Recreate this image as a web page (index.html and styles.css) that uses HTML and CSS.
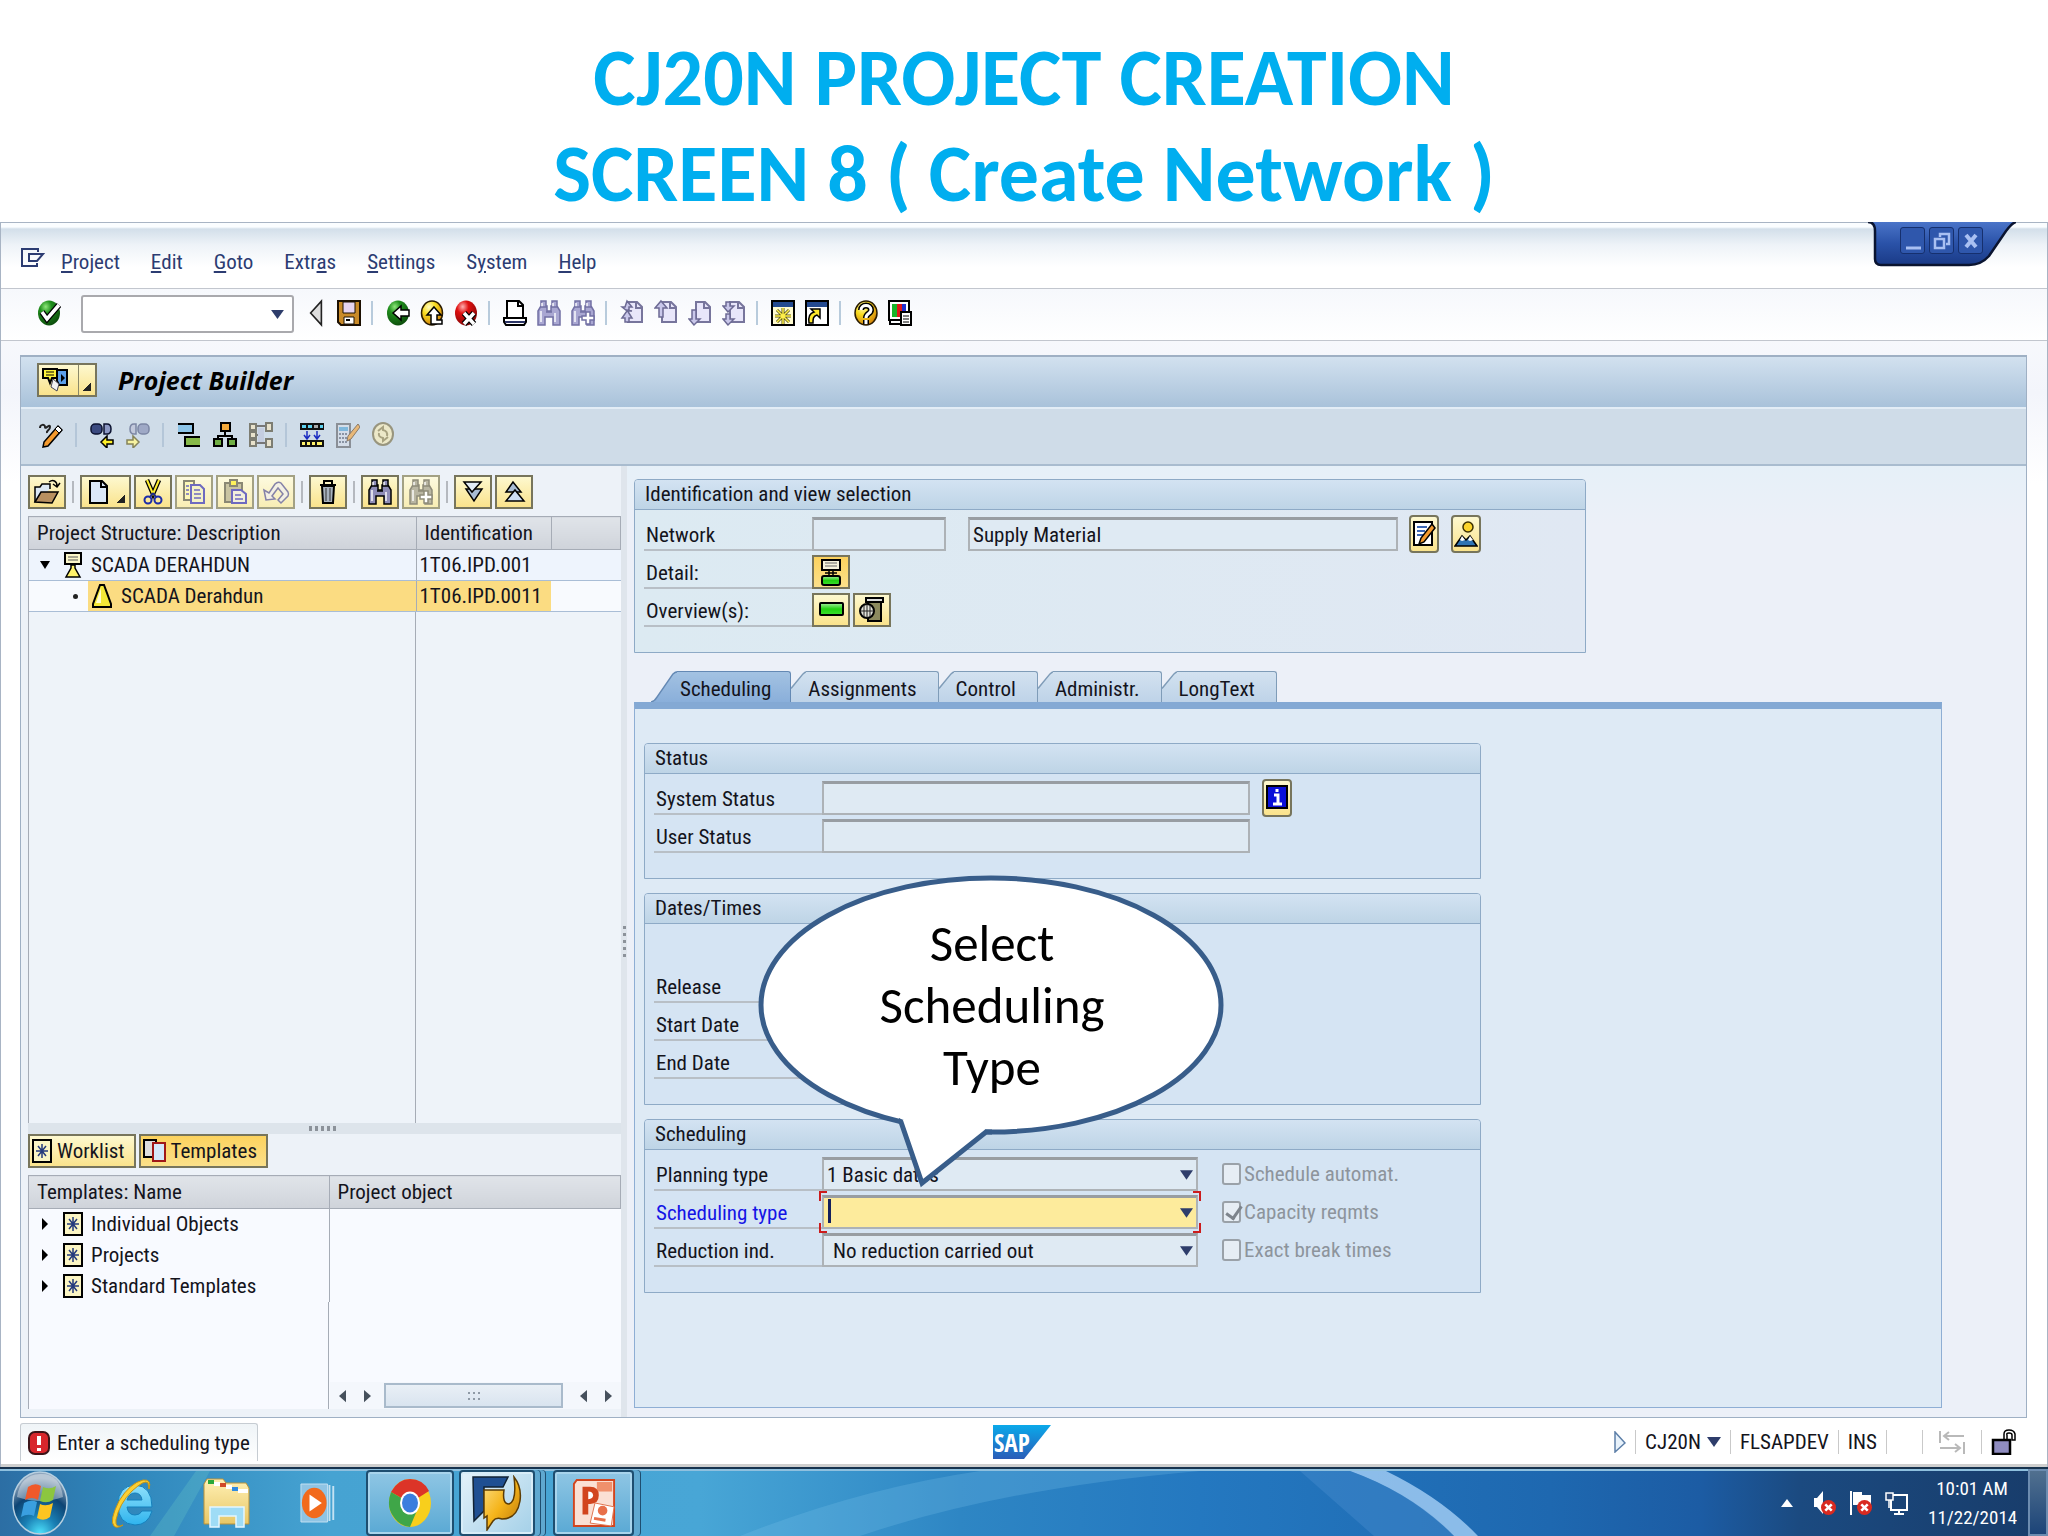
FILE: index.html
```html
<!DOCTYPE html>
<html lang="en">
<head>
<meta charset="utf-8">
<title>CJ20N Project Creation</title>
<link rel="stylesheet" href="styles.css">
</head>
<body>
<svg class="defs" aria-hidden="true">
  <defs>
    <linearGradient id="gLogo" x1="0" y1="0" x2="0" y2="1"><stop offset="0" stop-color="#0aa9ea"/><stop offset="1" stop-color="#2a5db8"/></linearGradient>
    <linearGradient id="gCap" x1="0" y1="0" x2="0" y2="1"><stop offset="0" stop-color="#4a74c8"/><stop offset=".5" stop-color="#2a52a8"/><stop offset="1" stop-color="#1a3a86"/></linearGradient>
    <linearGradient id="gTab" x1="0" y1="0" x2="0" y2="1"><stop offset="0" stop-color="#d3e2f0"/><stop offset="1" stop-color="#bed3e8"/></linearGradient>
    <linearGradient id="gTabOn" x1="0" y1="0" x2="0" y2="1"><stop offset="0" stop-color="#a3c2e2"/><stop offset="1" stop-color="#8aafda"/></linearGradient>
    <linearGradient id="gGreen" x1="0" y1="0" x2="0" y2="1"><stop offset="0" stop-color="#a8f0a0"/><stop offset=".5" stop-color="#22d012"/><stop offset="1" stop-color="#3ee030"/></linearGradient>
    <radialGradient id="gOrb" cx=".5" cy="1" r=".9"><stop offset="0" stop-color="#4fe6ff"/><stop offset=".35" stop-color="#1a7fb4"/><stop offset=".7" stop-color="#0d4474"/><stop offset="1" stop-color="#8fa6bd"/></radialGradient>
    <linearGradient id="gIe" x1="0" y1="0" x2="0" y2="1"><stop offset="0" stop-color="#8fe0fb"/><stop offset="1" stop-color="#2fb4ee"/></linearGradient>
    <linearGradient id="gFolder" x1="0" y1="0" x2="0" y2="1"><stop offset="0" stop-color="#fff0b4"/><stop offset="1" stop-color="#e8c766"/></linearGradient>
    <linearGradient id="gGold" x1="0" y1="0" x2="1" y2="1"><stop offset="0" stop-color="#fce08a"/><stop offset=".5" stop-color="#f5b41a"/><stop offset="1" stop-color="#b8750a"/></linearGradient>
    <radialGradient id="gBallG" cx=".35" cy=".25" r=".9"><stop offset="0" stop-color="#8ee87a"/><stop offset=".3" stop-color="#1f8f1c"/><stop offset="1" stop-color="#083c08"/></radialGradient>
    <radialGradient id="gBallY" cx=".35" cy=".25" r=".9"><stop offset="0" stop-color="#fffbc0"/><stop offset=".35" stop-color="#f8dc20"/><stop offset="1" stop-color="#c86a04"/></radialGradient>
    <radialGradient id="gBallR" cx=".35" cy=".25" r=".9"><stop offset="0" stop-color="#ffb0b0"/><stop offset=".3" stop-color="#e01010"/><stop offset="1" stop-color="#700404"/></radialGradient>
  </defs>
  <symbol id="find" viewBox="0 0 24 26"><path class="find-body" d="M4 1h5v5h1v5h4V6h1V1h5v5l3 5v14h-7v-8h-8v8H1V11l3-5z" stroke="currentColor" stroke-width="1.500"/><path d="M5 3v4M16 3v4M4 11v11M18 13v9" stroke="#fff" stroke-opacity=".7" stroke-width="2" fill="none"/><path d="M4 7h6M14 7h7M9 12h6" stroke="currentColor" stroke-width="1.500"/></symbol>
  <symbol id="plus" viewBox="0 0 24 26"><path d="M15 12h4v4h4v4h-4v4h-4v-4h-4v-4h4z" fill="#fff" stroke="currentColor" stroke-width="1.5"/></symbol>
  <symbol id="star" viewBox="0 0 20 24"><path d="M1 1h18v22H1z" fill="#fbf5c4" stroke="#000" stroke-width="2"/><path d="M10 5v14M4 12h12M6 7l8 10M14 7L6 17" stroke="#253a7c" stroke-width="1.5"/></symbol>
  <symbol id="page" viewBox="0 0 24 26"><path d="M8 2h9l5 5v15H8z" fill="#e8e6fa" stroke="#77759c" stroke-width="2"/><path d="M16 2v6h6" fill="none" stroke="#77759c" stroke-width="2"/></symbol>
  <symbol id="caret" viewBox="0 0 14 12"><path d="M0 1h14L7 11z" fill="#2e3d6b"/></symbol>
  <symbol id="err" viewBox="0 0 14 14"><circle cx="7" cy="7" r="7" fill="#d92a20"/><path d="M4 4l6 6M10 4l-6 6" stroke="#fff" stroke-width="2.4"/></symbol>
</svg>

<h1 class="slide-title">CJ20N PROJECT CREATION<br>SCREEN 8 ( Create Network )</h1>

<main class="window">
  <div class="caption">
    <svg class="caption-shape" viewBox="0 0 148 46" aria-hidden="true"><path d="M0 0q7 0 7 9v28q0 6 6 6h88q12 0 20-9l17-25q6-8 10-9z" fill="url(#gCap)"/><path d="M0 0q7 0 7 9v28q0 6 6 6h88q12 0 20-9l17-25q6-8 10-9" fill="none" stroke="#0a1430" stroke-width="2.5"/></svg>
    <button class="cap-btn" aria-label="Minimize"><svg viewBox="0 0 20 22"><path d="M3 18h15" stroke="#a9c0f2" stroke-width="3"/></svg></button>
    <button class="cap-btn" aria-label="Restore"><svg viewBox="0 0 20 22"><path d="M3 9h9v9H3zM8 7V4h9v10h-3" fill="none" stroke="#a9c0f2" stroke-width="2.5"/></svg></button>
    <button class="cap-btn" aria-label="Close"><svg viewBox="0 0 20 22"><path d="M5 5l10 12M15 5L5 17" stroke="#a9c0f2" stroke-width="4"/></svg></button>
  </div>

  <nav class="menubar">
    <button class="menu-icon" aria-label="Window menu"><svg viewBox="0 0 24 20"><path d="M17 4V1H1v17h15v-3M8 6h14l-6 7H8z" fill="none" stroke="#2c3c72" stroke-width="2"/></svg></button>
    <button><u>P</u>roject</button><button><u>E</u>dit</button><button><u>G</u>oto</button><button>Extr<u>a</u>s</button><button><u>S</u>ettings</button><button>S<u>y</u>stem</button><button><u>H</u>elp</button>
  </nav>

  <div class="sysbar">
    <button aria-label="Enter"><svg viewBox="0 0 24 26"><ellipse cx="12" cy="13" rx="11" ry="12.500" fill="url(#gBallG)"/><path d="M5 12l5 7L22 5" fill="none" stroke="#000" stroke-width="6"/><path d="M5 12l5 7L22 5" fill="none" stroke="#fff" stroke-width="3.500"/></svg></button>
    <span class="cmd"><input type="text" aria-label="Command field"><svg><use href="#caret"/></svg></span>
    <button class="back" aria-label="Collapse"><svg viewBox="0 0 14 26"><path d="M12 2v22L2 13z" fill="#ddd" stroke="#222" stroke-width="1.500"/></svg></button>
    <button aria-label="Save"><svg viewBox="0 0 24 26"><path d="M1 1h22v24H4l-3-3z" fill="#c98a28" stroke="#1c1002" stroke-width="2"/><path d="M6 2h12v11H6z" fill="#e6d4f0" stroke="#1c1002"/><path d="M7 17h10v7H7z" fill="#fff" stroke="#1c1002"/><path d="M9 20h4" stroke="#000" stroke-width="2"/></svg></button>
    <i></i>
    <button aria-label="Back"><svg viewBox="0 0 24 26"><ellipse cx="12" cy="13" rx="11" ry="12.500" fill="url(#gBallG)"/><path d="M7 13l8-7v4h8v6h-8v4z" fill="#fff" stroke="#000" stroke-width="1.500"/></svg></button>
    <button aria-label="Exit"><svg viewBox="0 0 24 26"><ellipse cx="12" cy="13" rx="10.500" ry="12" fill="url(#gBallY)" stroke="#2a1c00" stroke-width="1.500"/><path d="M14 7l7 8h-4v5h5v4H11v-9H7z" fill="#fff" stroke="#000" stroke-width="1.500"/></svg></button>
    <button aria-label="Cancel"><svg viewBox="0 0 24 26"><ellipse cx="12" cy="13" rx="11" ry="12.500" fill="url(#gBallR)"/><path d="M10 13l10 11M20 13L10 24" stroke="#000" stroke-width="6"/><path d="M10 13l10 11M20 13L10 24" stroke="#fff" stroke-width="3.500"/></svg></button>
    <i></i>
    <button aria-label="Print"><svg viewBox="0 0 24 26"><path d="M4 1h12l4 4v13H4z" fill="#fff" stroke="#000" stroke-width="2"/><path d="M15 1v5h5" fill="none" stroke="#000" stroke-width="2"/><path d="M1 18h22v4l-2 3H3l-2-3z" fill="#fff" stroke="#000" stroke-width="2"/><path d="M2 22h20" stroke="#2b3567" stroke-width="2"/></svg></button>
    <button class="dim" aria-label="Find"><svg><use href="#find"/></svg></button>
    <button class="dim" aria-label="Find next"><svg><use href="#find"/><use href="#plus"/></svg></button>
    <i></i>
    <button aria-label="First page"><svg viewBox="0 0 24 26"><use href="#page"/><path d="M7 1l5 6H9v4h3l-5-1 5 8H9v4H5v-4H2l5-7-5-4h3z" fill="#c9c7ea" stroke="#6c6a94" stroke-width="1.500"/></svg></button>
    <button aria-label="Previous page"><svg viewBox="0 0 24 26"><use href="#page"/><path d="M7 1l6 7H9v9H5V8H1z" fill="#c9c7ea" stroke="#6c6a94" stroke-width="1.500"/></svg></button>
    <button aria-label="Next page"><svg viewBox="0 0 24 26"><use href="#page"/><path d="M6 25l-5-6h3v-9h4v9h4z" fill="#c9c7ea" stroke="#6c6a94" stroke-width="1.500"/></svg></button>
    <button aria-label="Last page"><svg viewBox="0 0 24 26"><use href="#page"/><path d="M6 12L1 6h3V2h4v4h4zM6 25l-5-6h3v-5h4v5h4z" fill="#c9c7ea" stroke="#6c6a94" stroke-width="1.500"/></svg></button>
    <i></i>
    <button aria-label="New session"><svg viewBox="0 0 24 26"><path d="M1 1h22v24H1z" fill="#fffbd0" stroke="#000" stroke-width="2"/><path d="M2 2h20v5H2z" fill="#244a90"/><path d="M12 8v16M4 16h16M6 10l12 12M18 10L6 22" stroke="#55501a" stroke-width="3"/><path d="M12 8v16M4 16h16M6 10l12 12M18 10L6 22" stroke="#fff04a" stroke-width="1.500"/></svg></button>
    <button aria-label="Create shortcut"><svg viewBox="0 0 24 26"><path d="M1 1h22v24H1z" fill="#fff" stroke="#000" stroke-width="2"/><path d="M2 2h20v5H2z" fill="#244a90"/><path d="M4 23c-1-7 1-10 5-11l-3-3h9v9l-3-3c-4 1-4 4-4 8z" fill="#ffe92c" stroke="#000" stroke-width="1.500"/></svg></button>
    <i></i>
    <button aria-label="Help"><svg viewBox="0 0 24 26"><ellipse cx="12" cy="13" rx="11" ry="12" fill="url(#gBallY)" stroke="#2a1c00" stroke-width="1.500"/><path d="M7 10c0-6 10-6 10 0 0 4-5 3-5 8M12 20v4" fill="none" stroke="#000" stroke-width="6"/><path d="M7 10c0-6 10-6 10 0 0 4-5 3-5 8M12 20v4" fill="none" stroke="#fff" stroke-width="3"/></svg></button>
    <button aria-label="Customize layout"><svg viewBox="0 0 24 26"><path d="M1 1h20v19H1z" fill="#fff" stroke="#000" stroke-width="2"/><path d="M4 4h5v13H4z" fill="#18b428"/><path d="M9 4h5v13H9z" fill="#e01818"/><path d="M14 4h4v13h-4z" fill="#2030d0"/><path d="M2 20v4h12" fill="none" stroke="#000" stroke-width="2"/><path d="M13 12h10v13H13z" fill="#fff" stroke="#000" stroke-width="2"/><path d="M15 16h6M15 19h6M15 22h6" stroke="#000"/></svg></button>
  </div>

  <section class="frame">
    <header class="titlebar">
      <button class="ybtn func" aria-label="Services for object"><svg viewBox="0 0 36 30"><path d="M4 4h14v9h-5l-2 5-2-5H4z" fill="#fdf23a" stroke="#000" stroke-width="2"/><path d="M7 7h8M7 10h8" stroke="#000"/><path d="M18 5h10v15h-8l-2-4z" fill="#5da0e8" stroke="#000" stroke-width="2"/><path d="M22 9v8l4-4z" fill="#000"/><path d="M14 14l6 5-2 7-6-4z" fill="#f2f2f2" stroke="#445" stroke-width="1"/></svg><span class="split"></span></button>
      <h2>Project Builder</h2>
    </header>
    <div class="appbar">
      <button aria-label="Display / change"><svg viewBox="0 0 24 26"><path d="M1 6c0-4 5-4 5-1s5-4 5 0-4 3-3 6" fill="none" stroke="#222" stroke-width="2"/><path d="M19 4l4 4-14 16-5 1 1-5z" fill="#f49a2e" stroke="#000" stroke-width="1.500"/><path d="M19 4l4 4-3 3-4-4z" fill="#fff" stroke="#000"/></svg></button>
      <i></i>
      <button aria-label="Undo move"><svg viewBox="0 0 24 26"><rect x="1" y="2" width="11" height="10" rx="4" fill="#3b4a80" stroke="#0c1230" stroke-width="1.500"/><path d="M14 2h3q4 0 4 5t-4 5h-3z" fill="#8c98c4" stroke="#0c1230" stroke-width="1.500"/><path d="M11 20l6-6v4h6v4h-6v4z" fill="#fff02a" stroke="#000" stroke-width="1.500"/></svg></button>
      <button aria-label="Redo move"><svg viewBox="0 0 24 26"><rect x="12" y="2" width="11" height="10" rx="4" fill="#9fa9c6" stroke="#7c86a4" stroke-width="1.500"/><path d="M10 2H8Q4 2 4 7t4 5h2z" fill="#c2c9dc" stroke="#7c86a4" stroke-width="1.500"/><path d="M13 20l-6-6v4H1v4h6v4z" fill="#f6f2a0" stroke="#85835a" stroke-width="1.500"/></svg></button>
      <i></i>
      <button aria-label="Planning board"><svg viewBox="0 0 24 26"><path d="M1 2h15v9H1z" fill="#8cc4e8"/><path d="M1 2h15v9H1" fill="none" stroke="#000" stroke-width="2"/><path d="M8 15h15v9H8z" fill="#86b848"/><path d="M23 15H8v9h15" fill="none" stroke="#000" stroke-width="2"/></svg></button>
      <button aria-label="Hierarchy graphic"><svg viewBox="0 0 24 26"><path d="M12 9v5M5 18v-4h14v4" fill="none" stroke="#000" stroke-width="2"/><path d="M8 1h9v8H8z" fill="#f2a83a" stroke="#000" stroke-width="2"/><path d="M1 17h8v7H1zM15 17h8v7h-8z" fill="#6fae44" stroke="#000" stroke-width="2"/></svg></button>
      <button aria-label="Network graphic"><svg viewBox="0 0 24 26"><path d="M7 4h10M7 21h10M7 13h5" stroke="#777" stroke-width="2"/><path d="M1 2h6v6H1zM1 10h6v6H1zM1 18h6v6H1zM17 1h6v8h-6zM17 17h6v8h-6z" fill="#e8e2cc" stroke="#7d7d72" stroke-width="2"/><path d="M9 6h6v14H9z" fill="#c4cde0"/></svg></button>
      <i></i>
      <button aria-label="Mass change"><svg viewBox="0 0 24 26"><path d="M0 1h24v7H0z" fill="#111"/><path d="M2 3h4v3H2zM8 3h4v3H8zM20 3h3v3h-3z" fill="#5ed2f0"/><path d="M14 3h4v3h-4z" fill="#aaa"/><path d="M7 9v7M4 13l3 4 3-4M17 9v7M14 13l3 4 3-4" fill="none" stroke="#1c2cc0" stroke-width="1.500"/><path d="M0 18h24v7H0z" fill="#111"/><path d="M2 20h3v3H2zM7 20h3v3H7zM12 20h3v3h-3zM17 20h5v3h-5z" fill="#fff26a"/></svg></button>
      <button aria-label="Costing"><svg viewBox="0 0 24 26"><path d="M1 2h13v23H1z" fill="#d4dde8" stroke="#8a8f96" stroke-width="2"/><path d="M3 5h9v4H3z" fill="#7fb8dc"/><path d="M3 12h9M3 16h9M3 20h9" stroke="#8a94a4" stroke-width="2" stroke-dasharray="2 1"/><path d="M22 2l2 3-9 12-4 2 1-5z" fill="#e8b878" stroke="#8b7a66"/></svg></button>
      <button aria-label="Settle"><svg viewBox="0 0 24 26"><ellipse cx="11" cy="12" rx="10" ry="11" fill="#ece8c8" stroke="#98957e" stroke-width="2"/><path d="M6 9l5-4v3q5 1 4 6M16 15l-5 4v-3q-5-1-4-5" fill="none" stroke="#a8a280" stroke-width="2"/></svg></button>
    </div>

    <div class="work">
      <aside class="left">
        <div class="treebar">
          <button class="ybtn" aria-label="Open"><svg viewBox="0 0 30 28"><path d="M3 24V9h5l2-3h8v5" fill="#dce8f4" stroke="#000" stroke-width="1.500"/><path d="M3 24l6-10h17l-6 11z" fill="#b89060" stroke="#000" stroke-width="1.500"/><path d="M17 4c4-3 8-1 8 4M21 6l4 3 3-4" fill="none" stroke="#000" stroke-width="1.500"/></svg></button>
          <i></i>
          <button class="ybtn wide" aria-label="Create"><svg viewBox="0 0 30 28"><path d="M6 3h12l5 5v17H6z" fill="#dbe8f8" stroke="#000" stroke-width="2"/><path d="M17 3v6h6" fill="none" stroke="#000" stroke-width="2"/></svg><span class="corner"></span></button>
          <button class="ybtn" aria-label="Cut"><svg viewBox="0 0 30 28"><path d="M9 2l6 14 6-14" fill="none" stroke="#000" stroke-width="4.500"/><path d="M9 2l6 14 6-14" fill="none" stroke="#ffee30" stroke-width="2"/><path d="M15 15l-3 4M15 15l3 4" stroke="#1c2a8c" stroke-width="2"/><circle cx="10" cy="22" r="3.500" fill="none" stroke="#1c2ca8" stroke-width="2"/><circle cx="20" cy="22" r="3.500" fill="none" stroke="#1c2ca8" stroke-width="2"/></svg></button>
          <button class="ybtn off" aria-label="Copy"><svg viewBox="0 0 30 28"><path d="M5 3h10v19H5z" fill="#fdf8b8" stroke="#8a8874" stroke-width="2"/><path d="M12 7h9l4 4v14H12z" fill="#f4f2c8" stroke="#6e6ac0" stroke-width="2"/><path d="M15 12h6M15 16h7M15 20h7M7 8h3M7 12h3M7 16h3" stroke="#6e6ac0" stroke-width="1.500"/></svg></button>
          <button class="ybtn off" aria-label="Paste"><svg viewBox="0 0 30 28"><path d="M5 5h17v19H5z" fill="#c9c4a2" stroke="#8a8874" stroke-width="2"/><path d="M10 2h7v6h-7z" fill="#fff25c" stroke="#8a8874" stroke-width="2"/><path d="M12 12h9l5 4v9H12z" fill="#f2f0dc" stroke="#6e6ac0" stroke-width="2"/><path d="M15 17h6M15 21h8" stroke="#6e6ac0" stroke-width="1.500"/></svg></button>
          <button class="ybtn off" aria-label="Undo"><svg viewBox="0 0 30 28"><path d="M3 12l2 10 9-1-3-3 6-8 5 6-5 6 3 3 7-7q1-2 0-4l-7-9q-3-2-6 1l-6 9z" fill="#f3f0e4" stroke="#8582a8" stroke-width="1.500"/></svg></button>
          <i></i>
          <button class="ybtn" aria-label="Delete"><svg viewBox="0 0 30 28"><path d="M9 8h12l-1 17H10z" fill="#a8b2be" stroke="#000" stroke-width="2"/><path d="M13 10v13M17 10v13" stroke="#333"/><path d="M7 7h16M11 6V3h8v3" fill="none" stroke="#000" stroke-width="2"/></svg></button>
          <i></i>
          <button class="ybtn deep" aria-label="Find"><svg viewBox="-3 -1 30 28"><use href="#find" width="24" height="26"/></svg></button>
          <button class="ybtn off faint" aria-label="Find next"><svg viewBox="-3 -1 30 28"><use href="#find" width="24" height="26"/><use href="#plus" width="24" height="26"/></svg></button>
          <i></i>
          <button class="ybtn" aria-label="Expand all"><svg viewBox="0 0 30 28"><path d="M8 11h16l-8 12z" fill="#a8bcd4" stroke="#000" stroke-width="1.500"/><path d="M6 4h17l-9 10z" fill="#e2ecf6" stroke="#000" stroke-width="1.500"/></svg></button>
          <button class="ybtn" aria-label="Collapse all"><svg viewBox="0 0 30 28"><path d="M7 14h15l-8-10z" fill="#a8bcd4" stroke="#000" stroke-width="1.500"/><path d="M7 23h18L16 12z" fill="#cfe0f6" stroke="#000" stroke-width="1.500"/></svg></button>
        </div>

        <div class="tree">
          <table>
            <colgroup><col class="c-desc"><col class="c-id"><col></colgroup>
            <thead><tr><th>Project Structure: Description</th><th>Identification</th><th></th></tr></thead>
            <tbody>
              <tr><td><span class="node"><svg class="tw" viewBox="0 0 10 10"><path d="M0 1h10L5 9z"/></svg><svg class="ico-def" viewBox="0 0 20 26"><path d="M2 1h16v11H2z" fill="#fbf6c8" stroke="#000" stroke-width="2"/><path d="M5 5h10M5 8h10" stroke="#555"/><path d="M8 13h4v3l5 9H3l5-9z" fill="#fff26a" stroke="#000" stroke-width="1.500"/></svg>SCADA DERAHDUN</span></td><td>1T06.IPD.001</td><td></td></tr>
              <tr class="sel"><td><span class="node child"><b class="dot"></b><span class="hit"><svg class="ico-wbs" viewBox="0 0 22 26"><path d="M9 2h4l7 19v3H2v-3z" fill="#f4e838" stroke="#000" stroke-width="2"/><path d="M10 5L5 20h5z" fill="#fffcd0"/></svg>SCADA Derahdun</span></span></td><td>1T06.IPD.0011</td><td></td></tr>
            </tbody>
          </table>
          <div class="tree-fill"></div>
        </div>
        <div class="hsplit"><span></span></div>

        <div class="switch">
          <button class="ybtn txt"><svg><use href="#star"/></svg>Worklist</button>
          <button class="ybtn txt on"><svg class="copyico" viewBox="0 0 24 24"><path d="M1 1h12v17H1z" fill="#ddd" stroke="#000" stroke-width="2"/><path d="M10 4h12v18H10z" fill="#d4e8fa" stroke="#a01818" stroke-width="2"/></svg>Templates</button>
        </div>

        <div class="tpl">
          <table>
            <colgroup><col class="c-name"><col></colgroup>
            <thead><tr><th>Templates: Name</th><th>Project object</th></tr></thead>
            <tbody>
              <tr><td><span class="node"><svg class="tw" viewBox="0 0 10 12"><path d="M2 0v12l6-6z"/></svg><svg class="ico-star"><use href="#star"/></svg>Individual Objects</span></td><td></td></tr>
              <tr><td><span class="node"><svg class="tw" viewBox="0 0 10 12"><path d="M2 0v12l6-6z"/></svg><svg class="ico-star"><use href="#star"/></svg>Projects</span></td><td></td></tr>
              <tr><td><span class="node"><svg class="tw" viewBox="0 0 10 12"><path d="M2 0v12l6-6z"/></svg><svg class="ico-star"><use href="#star"/></svg>Standard Templates</span></td><td></td></tr>
            </tbody>
          </table>
          <div class="tpl-fill">
            <div class="scroll">
              <button aria-label="Scroll left"><svg viewBox="0 0 8 14"><path d="M8 0v14L0 7z"/></svg></button>
              <button aria-label="Scroll right"><svg viewBox="0 0 8 14"><path d="M0 0v14l8-7z"/></svg></button>
              <span class="thumb"><svg viewBox="0 0 14 10"><path d="M1 2h12M1 8h12" stroke="#8f9aa6" stroke-width="2" stroke-dasharray="2 3"/></svg></span>
              <button aria-label="Page left"><svg viewBox="0 0 8 14"><path d="M8 0v14L0 7z"/></svg></button>
              <button aria-label="Page right"><svg viewBox="0 0 8 14"><path d="M0 0v14l8-7z"/></svg></button>
            </div>
          </div>
        </div>
      </aside>
      <div class="vsplit"><span></span></div>

      <section class="right">
        <fieldset class="group ident">
          <legend>Identification and view selection</legend>
          <div class="row"><label for="net">Network</label><input id="net" class="f-net" type="text" readonly><input class="f-desc" type="text" value="Supply Material" aria-label="Network description" readonly>
            <button class="ybtn small" aria-label="Long text"><svg viewBox="0 0 24 30"><path d="M2 3h18v23H2z" fill="#fff" stroke="#000" stroke-width="2"/><path d="M5 8h10M5 12h8M5 16h6" stroke="#3c66b4" stroke-width="2"/><path d="M20 5l3 4L12 23l-5 2 2-6z" fill="#f49a2e" stroke="#000" stroke-width="1.500"/></svg></button>
            <button class="ybtn small" aria-label="Picture"><svg viewBox="0 0 24 30"><circle cx="14" cy="8" r="5" fill="#fbd42c" stroke="#3c3000" stroke-width="1.500"/><path d="M1 27l7-10 4 4 4-4 7 10z" fill="#2f74b4" stroke="#000" stroke-width="1.500"/><path d="M8 17l3 4-3 1-2-1zM16 17l3 4-3 1-2-1z" fill="#fff"/></svg></button>
          </div>
          <div class="row"><label>Detail:</label>
            <button class="ybtn on" aria-label="Network header"><svg viewBox="0 0 30 28"><path d="M6 2h18v10H6z" fill="#f5f3dc" stroke="#000" stroke-width="2"/><path d="M9 5h12M9 8h12" stroke="#666"/><path d="M13 12v6M17 12v6M9 15h12" stroke="#000" stroke-width="1.500"/><rect x="6" y="18" width="18" height="9" rx="2" fill="url(#gGreen)" stroke="#000" stroke-width="2"/></svg></button></div>
          <div class="row"><label>Overview(s):</label>
            <button class="ybtn" aria-label="Activity overview"><svg viewBox="0 0 30 28"><rect x="4" y="7" width="23" height="12" rx="1" fill="url(#gGreen)" stroke="#000" stroke-width="2"/></svg></button>
            <button class="ybtn" aria-label="Component overview"><svg viewBox="0 0 30 28"><path d="M9 2h17v4H9z" fill="#ddd" stroke="#000" stroke-width="2"/><path d="M11 6h13v19H11z" fill="#8c8a5e" stroke="#000" stroke-width="2"/><circle cx="10" cy="15" r="7" fill="#e4e4dc" stroke="#000" stroke-width="2"/><path d="M10 8v14M7 9v12M13 9v12M3 15h14" stroke="#222"/></svg></button></div>
        </fieldset>

        <div class="tabs" role="tablist">
          <button class="tab active" role="tab"><svg viewBox="0 0 26 32" preserveAspectRatio="none"><path d="M0 32q4-1 6-5L22 3q2-3 4-3v32z" fill="url(#gTabOn)"/><path d="M0 32q4-1 6-5L22 3q2-2 4-2" fill="none" stroke="#6489b4" stroke-width="1.500"/></svg><span>Scheduling</span></button>
          <button class="tab" role="tab"><svg viewBox="0 0 15 32" preserveAspectRatio="none"><path d="M0 32V18L12 3l3-3v32z" fill="url(#gTab)"/><path d="M0 18L12 3q2-2 3-2" fill="none" stroke="#7f9cb8" stroke-width="1.500"/></svg><span>Assignments</span></button>
          <button class="tab" role="tab"><svg viewBox="0 0 15 32" preserveAspectRatio="none"><path d="M0 32V18L12 3l3-3v32z" fill="url(#gTab)"/><path d="M0 18L12 3q2-2 3-2" fill="none" stroke="#7f9cb8" stroke-width="1.500"/></svg><span>Control</span></button>
          <button class="tab" role="tab"><svg viewBox="0 0 15 32" preserveAspectRatio="none"><path d="M0 32V18L12 3l3-3v32z" fill="url(#gTab)"/><path d="M0 18L12 3q2-2 3-2" fill="none" stroke="#7f9cb8" stroke-width="1.500"/></svg><span>Administr.</span></button>
          <button class="tab" role="tab"><svg viewBox="0 0 15 32" preserveAspectRatio="none"><path d="M0 32V18L12 3l3-3v32z" fill="url(#gTab)"/><path d="M0 18L12 3q2-2 3-2" fill="none" stroke="#7f9cb8" stroke-width="1.500"/></svg><span>LongText</span></button>
        </div>

        <div class="panel">
          <fieldset class="group">
            <legend>Status</legend>
            <div class="row"><label for="sys">System Status</label><input id="sys" class="f-status" type="text" readonly>
              <button class="ybtn small" aria-label="Status information"><svg viewBox="0 0 24 30"><path d="M2 3h20v22H2z" fill="#0a10d8" stroke="#000" stroke-width="2"/><path d="M12 6v3M9 12h4v9M8 21h9" fill="none" stroke="#fff" stroke-width="3"/></svg></button></div>
            <div class="row"><label for="usr">User Status</label><input id="usr" class="f-status" type="text" readonly></div>
          </fieldset>

          <fieldset class="group dates">
            <legend>Dates/Times</legend>
            <div class="row"></div>
            <div class="row"><label>Release</label></div>
            <div class="row"><label>Start Date</label></div>
            <div class="row"><label>End Date</label></div>
            <div class="callout">
              <svg viewBox="0 0 466 310" aria-hidden="true"><ellipse cx="232" cy="129" rx="230" ry="127" fill="#fff" stroke="#385d8a" stroke-width="5"/><path d="M142 246l21 61 64-51-10-24h-60z" fill="#fff"/><path d="M139 244l3 2 21 61 64-51h6" fill="none" stroke="#385d8a" stroke-width="5"/></svg>
              <p>Select<br>Scheduling<br>Type</p>
            </div>
          </fieldset>

          <fieldset class="group">
            <legend>Scheduling</legend>
            <div class="row"><label for="plan">Planning type</label><span class="sel-box"><select id="plan"><option>1 Basic dates</option></select><svg><use href="#caret"/></svg></span><label class="tick"><input type="checkbox" disabled>Schedule automat.</label></div>
            <div class="row"><label class="hot" for="sched">Scheduling type</label><span class="sel-box focus"><select id="sched"><option></option></select><svg><use href="#caret"/></svg><b class="cursor"></b></span><label class="tick"><input type="checkbox" checked disabled>Capacity reqmts</label></div>
            <div class="row"><label for="red">Reduction ind.</label><span class="sel-box inset"><select id="red"><option>No reduction carried out</option></select><svg><use href="#caret"/></svg></span><label class="tick"><input type="checkbox" disabled>Exact break times</label></div>
          </fieldset>
        </div>
      </section>
    </div>
  </section>

  <footer class="status">
    <p class="msg"><svg viewBox="0 0 22 24"><rect x="1" y="1" width="20" height="22" rx="6" fill="#d8262c" stroke="#3c1418" stroke-width="2"/><path d="M11 5v9M11 17v3" stroke="#fff" stroke-width="4"/></svg>Enter a scheduling type</p>
    <svg class="sap" viewBox="0 0 58 34" role="img" aria-label="SAP"><path d="M0 0h58L31 34H0z" fill="url(#gLogo)"/><text x="1" y="27" class="sap-text">SAP</text></svg>
    <div class="info">
      <svg class="i-play" viewBox="0 0 12 22"><path d="M1 1v20l10-9z" fill="#e8f2fb" stroke="#5d7fa8" stroke-width="1.500"/></svg>
      <span class="cell">CJ20N <svg class="i-caret"><use href="#caret"/></svg></span><span class="cell">FLSAPDEV</span><span class="cell">INS</span><span class="cell blank"></span>
      <span class="cell"><svg class="i-arr" viewBox="0 0 26 24"><path d="M1 1v12M5 6h20M10 2L5 6l5 4M25 12v12M1 18h19M16 14l5 4-5 4" fill="none" stroke="#b9b9b9" stroke-width="2"/></svg></span>
      <span class="cell last"><svg class="i-lock" viewBox="0 0 26 26"><path d="M13 11V5q0-4 5-4t6 4v6h-3V6q0-2-3-2t-2 2v5" fill="#fff" stroke="#000" stroke-width="1.500"/><path d="M2 11h17v14H2z" fill="#8f8cc0" stroke="#000" stroke-width="2.500"/></svg></span>
    </div>
  </footer>
</main>

<footer class="taskbar">
  <svg class="glow" viewBox="0 0 2048 69" preserveAspectRatio="none" aria-hidden="true"><path d="M740 69Q860 20 980 2h220Q1000 20 860 69z" fill="#7cc4ea" opacity=".25"/><path d="M1350 2h36q56 28 92 67h-24q-42-44-104-67z" fill="#9fcaf2" opacity=".85"/><path d="M1300 2h50q66 25 104 67h-80z" fill="#4a8fd0" opacity=".4"/><path d="M150 69L196 2h14l-36 67z" fill="#6fd0c8" opacity=".25"/></svg>
  <button class="orb" aria-label="Start"><svg viewBox="0 0 56 64"><ellipse cx="28" cy="32" rx="27" ry="31" fill="url(#gOrb)" stroke="#b8d0e0" stroke-width="1.500"/><path d="M5 26Q8 4 28 3t23 23q-22 8-46 0z" fill="#fff" opacity=".38"/><path d="M16 16q7-5 13-1l-3 14q-6-4-13 0z" fill="#f0592a"/><path d="M31 16q7 3 13-1l-3 14q-6 4-13 1z" fill="#8cc63f"/><path d="M12 32q7-4 13-1l-3 14q-6-3-13 1z" fill="#3a9fe0"/><path d="M28 33q6 3 13-1l-3 14q-6 5-13 1z" fill="#fcc520"/></svg></button>
  <button class="pin ie" aria-label="Internet Explorer"><svg viewBox="0 0 46 54"><path d="M42 31H17q1 8 8 8 5 0 7-4h10q-4 14-17 14Q8 48 8 29T25 9q17 1 17 22zM17 24h15q-1-7-7-7t-8 7z" fill="url(#gIe)" stroke="#1580bc"/><path d="M39 13q3-10-6-9Q20 7 9 25-1 45 4 50q3 3 9-1-8 4-7-5Q9 28 22 15 35 3 38 7z" fill="#fbd034" stroke="#c89412"/></svg></button>
  <button class="pin" aria-label="Explorer"><svg viewBox="0 0 48 50"><path d="M2 6l3-5h16l3 4h20l3 5v36H2z" fill="url(#gFolder)" stroke="#b8923a"/><path d="M6 2h6v4H6z" fill="#2aa83a"/><path d="M18 5h6v4h-6z" fill="#d04a2a"/><path d="M30 9h6v4h-6z" fill="#2f8ae0"/><path d="M12 6h6M24 9h6M36 13h10" stroke="#fff" stroke-width="4"/><path d="M8 49V29h34v20h-8V38H17v11z" fill="#9fdcf6" stroke="#e4f6ff" stroke-width="1.500"/></svg></button>
  <button class="pin wmp" aria-label="Media Player"><svg viewBox="0 0 40 44"><path d="M1 2h28v40H1z" fill="#8fc4e4" stroke="#c4e2f2"/><path d="M31 3v38M35 4v36" stroke="#c4e2f2" stroke-width="2"/><ellipse cx="15" cy="22" rx="13" ry="16" fill="#f26a1c"/><path d="M10 13l13 9-13 9z" fill="#fff"/></svg></button>
  <button class="task" aria-label="Chrome"><svg viewBox="0 0 44 50"><ellipse cx="22" cy="25" rx="21" ry="24" fill="#f8cf1c"/><path d="M22 25L3 14Q10 1 22 1q13 0 19 12z" fill="#dc3428"/><path d="M3 14Q-2 28 5 38q6 10 17 11l8-19-8-5z" fill="#3fa648"/><ellipse cx="22" cy="25" rx="10" ry="11.500" fill="#fff"/><ellipse cx="22" cy="25" rx="8" ry="9.500" fill="#3b7ede"/></svg></button>
  <button class="task lit stack" aria-label="SAP Logon"><svg viewBox="0 0 52 56"><path d="M2 2h35l-5 10H13v24L3 46z" fill="#1f4f92" stroke="#123" stroke-width="1.500"/><path d="M13 15h20q-2 14 5 14 8-3 5-27 8 10 6 24-3 18-18 18-6-2-9 2l-6 9V41l-3 2z" fill="url(#gGold)" stroke="#5c3c04" stroke-width="1.500"/></svg></button>
  <button class="task stack one" aria-label="PowerPoint"><svg viewBox="0 0 46 52"><path d="M5 2h39v48H2V6z" fill="#fbe0d4" stroke="#d2451e" stroke-width="2"/><path d="M26 4h16v10H26z" fill="#f0906c"/><path d="M11 38V9h8q9 0 9 9t-9 9h-2v11z" fill="#d2451e"/><path d="M17 14v8q5 0 5-4t-5-4z" fill="#fff"/><path d="M24 26l20 4-3 20-22-3z" fill="#fff" stroke="#e0704a"/><circle cx="32" cy="34" r="5" fill="#e8704a"/><path d="M23 42l12 2" stroke="#e8704a" stroke-width="3"/></svg></button>
  <div class="tray">
    <svg class="t-up" viewBox="0 0 12 8"><path d="M6 0l6 8H0z" fill="#fff"/></svg>
    <svg class="t-ico" viewBox="0 0 24 26"><path d="M1 8h3l6-7v23l-6-7H1z" fill="#fff"/><use href="#err" x="8" y="10" width="15" height="15"/></svg>
    <svg class="t-ico" viewBox="0 0 24 26"><path d="M2 1v24" stroke="#fff" stroke-width="2"/><path d="M4 2h9v3h9v10H4z" fill="#fff"/><use href="#err" x="8" y="10" width="15" height="15"/></svg>
    <svg class="t-ico" viewBox="0 0 24 26"><path d="M6 5h16v15H6zM9 24h10M14 20v4" fill="none" stroke="#fff" stroke-width="2"/><path d="M1 3h7v7H1zM4 10v8" fill="#2a4a78" stroke="#fff" stroke-width="1.500"/></svg>
    <time class="clock">10:01 AM<br>11/22/2014</time>
    <button class="peek" aria-label="Show desktop"></button>
  </div>
</footer>
</body>
</html>
```
FILE: styles.css
```css
* { box-sizing: border-box; }

body {
  margin: 0;
  min-height: 100vh;
  display: flex;
  flex-direction: column;
  background: #fff;
  color: #14141c;
  font: 21px/28px "Roboto Condensed", Roboto, sans-serif;
}

button, input, select { font: inherit; color: inherit; margin: 0; }
button { border: 0; padding: 0; background: none; display: flex; align-items: center; justify-content: center; }
svg { display: block; flex: none; }
p, h1, h2 { margin: 0; }
.defs { position: absolute; width: 0; height: 0; }

.slide-title {
  padding-top: 30px;
  text-align: center;
  color: #00aeef;
  font: bold 80px/96px Carlito, Lato, sans-serif;
}

/* window chrome */
.window {
  position: relative;
  flex: 1;
  display: flex;
  flex-direction: column;
  border: 1px solid #a8b4c4;
  border-bottom: 0;
  background: linear-gradient(#fff, #f3f5fb 170px, #fff 260px);
}
.caption {
  position: absolute;
  top: -1px;
  right: 31px;
  width: 148px;
  height: 46px;
  padding: 5px 0 0 32px;
  display: flex;
  gap: 4px;
}
.caption-shape { position: absolute; left: 0; top: 0; width: 148px; height: 46px; }
.cap-btn { position: relative; width: 25px; height: 27px; border: 1px solid #16306e; border-radius: 3px; background: #2f57ac; }
.cap-btn svg { width: 20px; height: 22px; }

.menubar {
  height: 66px;
  padding: 12px 20px 0;
  display: flex;
  align-items: center;
  gap: 31px;
  color: #2c3c72;
  border-bottom: 1px solid #c2c6ce;
  background: linear-gradient(#fafdff 4px, #d3dfea 6px, #eef3f8 22px, #fff 44px);
}
.menu-icon { margin-right: -15px; padding-bottom: 8px; }
.menu-icon svg { width: 24px; height: 20px; }

.sysbar {
  height: 52px;
  padding: 0 36px 3px;
  display: flex;
  align-items: center;
  gap: 10px;
  border-bottom: 1px solid #c2c6ce;
  background: linear-gradient(#f6f8fc, #fff);
}
.sysbar button, .sysbar button svg { width: 24px; height: 28px; }
.sysbar .back, .sysbar .back svg { width: 16px; }
.sysbar i { width: 5px; height: 24px; border-left: 2px solid #b8cbdc; }
.dim { color: #7270a4; --body: #a9a7d2; }
.cmd { display: flex; align-items: center; width: 213px; height: 38px; margin: 2px 4px 0 10px; padding-right: 8px; border: 2px solid #a9a9ad; border-radius: 3px; background: #fff; }
.cmd input { flex: 1; min-width: 0; border: 0; background: none; outline: 0; }
.cmd svg { width: 13px; height: 11px; }
.sysbar .back { margin-right: 3px; }
.find-body { fill: var(--body, #8f8db8); }

/* application frame */
.frame { flex: 1; display: flex; flex-direction: column; margin: 14px 20px 0 19px; border: 1px solid #9fb0c4; border-top-width: 2px; background: #e9eff7; }
.titlebar { height: 52px; padding: 0 16px 4px; display: flex; align-items: center; gap: 21px; border-bottom: 2px solid #e3edf6; background: linear-gradient(#d2e1ef, #a9c2da); }
.titlebar h2 { font: italic bold 25px/32px "Open Sans", "Noto Sans", sans-serif; color: #000; }
.appbar { height: 57px; padding: 0 18px 4px; display: flex; align-items: center; gap: 12px; border-bottom: 2px solid #a9bccf; background: #cfdce8; }
.appbar button, .appbar button svg { width: 24px; height: 26px; }
.appbar i { width: 3px; height: 24px; border-left: 2px solid #b4c6d8; }

.ybtn { width: 38px; height: 34px; flex: none; border: 2px solid #77755c; background: linear-gradient(#fdf8cf, #fae38c); color: #6b6a5c; }
.ybtn svg { width: 30px; height: 28px; }
.ybtn.wide { width: 51px; justify-content: flex-start; padding-left: 2px; }
.ybtn.off { border-color: #a3a184; background: linear-gradient(#fdfadf, #f8edb4); color: #a3a08c; }
.ybtn.deep { color: #000; }
.ybtn.faint { color: #8f8c7a; --body: #b9b6a2; }
.ybtn.on { background: linear-gradient(#fcd25e, #fbe08a); }
.ybtn.small { width: 30px; height: 38px; border-radius: 4px; }
.ybtn.small svg { width: 24px; height: 30px; }
.ybtn.func { width: 60px; justify-content: flex-start; background: linear-gradient(90deg, transparent 39px, #8a8868 39px 40px, transparent 40px), linear-gradient(#fdf8cf, #fae38c); }
.func svg { width: 36px; height: 30px; }
.split, .corner { align-self: flex-end; width: 8px; height: 8px; margin-bottom: 4px; background: linear-gradient(135deg, transparent 50%, #222 50%); }
.split { margin-left: 8px; }
.corner { margin-left: 3px; }

.work { flex: 1; display: grid; grid-template-columns: 600px 6px minmax(0, 1fr); }

/* left side: project tree and templates */
.left { display: flex; flex-direction: column; padding: 9px 0 8px 7px; background: #edf2f8; }
.treebar { display: flex; align-items: center; gap: 3px; padding-bottom: 7px; }
.treebar i { width: 8px; height: 22px; background: linear-gradient(#b5b9bf, #b5b9bf) center / 2px 100% no-repeat; }

table { width: 100%; table-layout: fixed; border-collapse: collapse; }
th { height: 33px; padding: 0 8px; text-align: left; font-weight: normal; border: 1px solid #a6acb6; background: linear-gradient(#e0e4e9, #cfd3da); }
th:first-child { border-left: 0; }
td { height: 31px; padding: 0 3px; white-space: nowrap; }
.c-desc { width: 387px; }
.c-id { width: 135px; }
.c-name { width: 300px; }
.tree { flex: 1; display: flex; flex-direction: column; border-left: 1px solid #a6acb6; background: #eef3f9; }
.tree td { border: 0 solid #a9bdd6; border-bottom-width: 1px; background: #f8fafe; }
.tree tr:first-child td { background: #eef4fd; }
.tree td:first-child, .tpl td:first-child { padding: 0; border-right: 1px solid #a6acb6; }
.tree .sel td:nth-child(2), .hit { background: #fbdc82; }
.tree-fill { flex: 1; width: 387px; border-right: 1px solid #a6acb6; }
.node { display: flex; align-items: center; height: 30px; padding-left: 11px; }
.tw { width: 10px; height: 12px; margin-right: 13px; }
.ico-def { width: 20px; height: 26px; margin-right: 8px; }
.ico-wbs { width: 22px; height: 26px; margin-right: 8px; }
.ico-star { width: 20px; height: 24px; margin-right: 8px; }
.child { padding-left: 44px; }
.dot { width: 5px; height: 5px; background: #222; border-radius: 50%; margin-right: 10px; }
.hit { flex: 1; height: 30px; display: flex; align-items: center; padding-left: 3px; }

.hsplit { height: 11px; display: flex; align-items: center; justify-content: center; background: #dde4eb; }
.hsplit span { width: 28px; height: 5px; margin-right: 4px; background: repeating-linear-gradient(90deg, #8c929a 0 3px, transparent 3px 6px); }
.switch { display: flex; gap: 3px; padding-bottom: 7px; }
.ybtn.txt { width: auto; padding: 0 9px 0 2px; gap: 5px; color: #14141c; }
.txt svg { width: 20px; height: 24px; }
.txt .copyico { width: 24px; }
.txt.on { gap: 4px; }
.tpl { height: 234px; display: flex; flex-direction: column; border-left: 1px solid #a6acb6; background: #f8faff; }
.tpl-fill { flex: 1; display: flex; align-items: flex-end; padding-left: 301px; background: linear-gradient(#a6acb6, #a6acb6) 299px 0 / 1px 100% no-repeat; }
.scroll { flex: 1; height: 27px; display: flex; align-items: center; background: #f4f7fc; }
.scroll button { width: 25px; height: 25px; }
.scroll button svg { width: 7px; height: 14px; fill: #46505c; }
.thumb { flex: 1; height: 25px; margin: 0 8px 0 4px; display: flex; align-items: center; justify-content: center; border: 2px solid #a9bacb; background: linear-gradient(#e9eff6, #d9e4ef); }
.thumb svg { width: 14px; height: 10px; }
.vsplit { display: flex; align-items: center; justify-content: center; background: #dfe5ec; }
.vsplit span { width: 3px; height: 32px; background: repeating-linear-gradient(#8c929a 0 3px, transparent 3px 7px); }

/* right side: detail area */
.right { display: flex; flex-direction: column; padding: 13px 84px 9px 7px; background: linear-gradient(#e6f0f8, #ecf0f8 60px); }
.group { position: relative; width: 837px; min-width: 0; margin: 0 0 14px; padding: 0 9px 21px; border: 1px solid #8eaac6; border-radius: 4px 4px 0 0; background: #d5e4f3; }
.ident { width: 952px; margin-bottom: 18px; background: linear-gradient(90deg, #dceaf2, #e0e8f3); }
.group legend { float: left; width: calc(100% + 18px); height: 30px; margin: 0 -9px 7px; padding: 0 10px; border-bottom: 1px solid #8eaac6; border-radius: 3px 3px 0 0; background: linear-gradient(#d3e3f2, #bed4e6); }
.row { clear: both; display: flex; align-items: center; height: 34px; margin-bottom: 4px; }
.row > label:first-child { width: 168px; height: 34px; padding: 4px 0 0 2px; border-bottom: 2px solid #b8bfc6; white-space: nowrap; }
.row .hot { color: #1414e6; }
.row input[type="text"], .sel-box { height: 34px; padding: 0 3px; border: 2px solid #adb2b6; border-top: 3px solid #989da2; background: #dfeaf3; outline: 0; }
.f-net { width: 134px; margin-right: 22px; }
.f-desc { width: 430px; margin-right: 11px; }
.f-status { width: 428px; margin-right: 12px; }
.f-desc + .small { margin-right: 12px; }
.row .ybtn + .ybtn:not(.small) { margin-left: 3px; }

.tabs { display: flex; padding-left: 17px; height: 31px; }
.tab svg { width: 15px; height: 31px; }
.tab.active svg { width: 26px; }
.tab span { height: 31px; padding: 3px 21px 0 2px; border-top: 1px solid #7f9cb8; border-right: 1px solid #7f9cb8; border-radius: 0 3px 0 0; background: linear-gradient(#d3e2f0, #bed3e8); }
.tab.active span { padding-right: 19px; padding-left: 3px; border-color: #6489b4; background: linear-gradient(#a3c2e2, #8aafda); }
.panel { flex: 1; padding: 34px 9px 0; border: 1px solid #8eaed4; border-top: 7px solid #84a9d4; background: #deeaf5; }
.panel .group:last-child { margin-bottom: 0; }

.sel-box { position: relative; display: flex; align-items: center; width: 376px; margin-right: 24px; }
.sel-box select { flex: 1; height: 29px; border: 0; padding: 0; background: none; appearance: none; outline: 0; }
.sel-box.inset select { padding-left: 6px; }
.sel-box svg { width: 13px; height: 12px; }
.row .focus { background: #fdeb9c; }
.focus::after { content: ""; position: absolute; inset: -7px -5px -6px; background:
  linear-gradient(#cc1c1c 0 0) 0 0 / 8px 2px, linear-gradient(#cc1c1c 0 0) 0 0 / 2px 10px,
  linear-gradient(#cc1c1c 0 0) 100% 0 / 8px 2px, linear-gradient(#cc1c1c 0 0) 100% 0 / 2px 10px,
  linear-gradient(#cc1c1c 0 0) 0 100% / 8px 2px, linear-gradient(#cc1c1c 0 0) 0 100% / 2px 10px,
  linear-gradient(#cc1c1c 0 0) 100% 100% / 8px 2px, linear-gradient(#cc1c1c 0 0) 100% 100% / 2px 10px;
  background-repeat: no-repeat; pointer-events: none; }
.cursor { position: absolute; left: 4px; top: 1px; width: 3px; height: 24px; background: #14205c; }
.tick { display: flex; align-items: center; gap: 3px; color: #8d949c; white-space: nowrap; }
.tick input { appearance: none; width: 19px; height: 22px; border: 2px solid #9aa1a8; border-radius: 3px; background: #e6edf4; }
.tick input:checked::before { content: ""; display: block; width: 7px; height: 13px; margin: 0 0 0 5px; border: solid #7d848c; border-width: 0 3px 3px 0; transform: rotate(35deg); }

.callout { position: absolute; left: 114px; top: -18px; width: 466px; height: 310px; z-index: 2; }
.callout svg { position: absolute; inset: 0; width: 466px; height: 310px; overflow: visible; }
.callout p { position: relative; padding-top: 37px; text-align: center; font: 51px/62px Carlito, Lato, sans-serif; color: #000; }

/* SAP status line */
.status { height: 49px; padding: 2px 30px 0 19px; display: grid; grid-template-columns: 1fr auto 1fr; align-items: center; border-bottom: 3px solid #cfcfcf; background: #fff; }
.msg { justify-self: start; height: 38px; padding: 0 7px; display: flex; align-items: center; gap: 7px; border: 1px solid #c6ccd2; border-bottom: 0; border-radius: 3px 3px 0 0; background: linear-gradient(#eff4f7, #fff); }
.msg svg { width: 22px; height: 24px; }
.sap { width: 58px; height: 34px; margin-left: 7px; }
.sap-text { font: bold 25px "Open Sans Condensed", "Roboto Condensed", sans-serif; fill: #fff; }
.info { justify-self: end; display: flex; align-items: center; }
.i-play { width: 12px; height: 22px; margin-right: 9px; }
.cell { display: flex; align-items: center; gap: 6px; height: 24px; padding: 0 9px; border-left: 1px solid #c9c9c9; }
.i-caret { width: 14px; height: 12px; }
.blank { width: 36px; }
.i-arr { width: 26px; height: 24px; margin: 0 7px; }
.i-lock { width: 26px; height: 26px; }
.cell.last { padding-right: 0; }

/* Windows taskbar */
.taskbar { position: relative; height: 69px; display: flex; align-items: center; border-top: 2px solid #16324e; box-shadow: inset 0 2px #8fc0de; color: #fff; background: linear-gradient(90deg, #2c6ea4 0, #2f86bb 120px, #46a3d2 330px, #48a6d6 700px, #2e86c4 960px, #2478c0 1200px, #1e68b0 1550px, #1c5ca4 1700px, #1b4a80 1800px, #183c6a 2048px); }
.glow { position: absolute; inset: 0; width: 100%; height: 100%; }
.taskbar button { position: relative; }
.orb { margin-left: 12px; }
.orb svg { width: 56px; height: 64px; }
.pin { margin-left: 46px; }
.pin svg { width: 48px; height: 50px; }
.ie { margin-left: 42px; }
.ie svg { width: 46px; height: 54px; }
.wmp { margin-left: 50px; }
.wmp svg { width: 38px; height: 44px; }
.task { width: 88px; height: 66px; margin-left: 28px; border: 2px solid #1e4e70; border-radius: 4px; box-shadow: inset 0 0 0 2px #a8d4ec; background: linear-gradient(#8fc6e4, #5aa9d4); }
.task svg { width: 44px; height: 50px; }
.task.stack { width: 76px; margin-left: 5px; box-shadow: inset 0 0 0 2px #d8edf8, 5px 0 #5fa8d0, 6px 0 #1e4e70, 10px 0 #5fa8d0, 11px 0 #1e4e70; }
.task.one { width: 81px; margin-left: 18px; box-shadow: inset 0 0 0 2px #a8d4ec, 6px 0 #5fa8d0, 7px 0 #1e4e70; }
.task.lit { background: linear-gradient(135deg, #e4f2fa, #a4d0e8); }
.task.lit svg { width: 52px; height: 56px; }
.tray { position: relative; margin-left: auto; display: flex; align-items: center; gap: 12px; }
.t-up { width: 12px; height: 8px; margin-right: 8px; }
.t-ico { width: 24px; height: 26px; }
.clock { width: 88px; margin-left: 7px; text-align: center; font-size: 19px; line-height: 29px; }
.peek { width: 20px; height: 67px; border: 2px solid #6c8cb0; background: linear-gradient(#51708f, #1c4478); }
```
